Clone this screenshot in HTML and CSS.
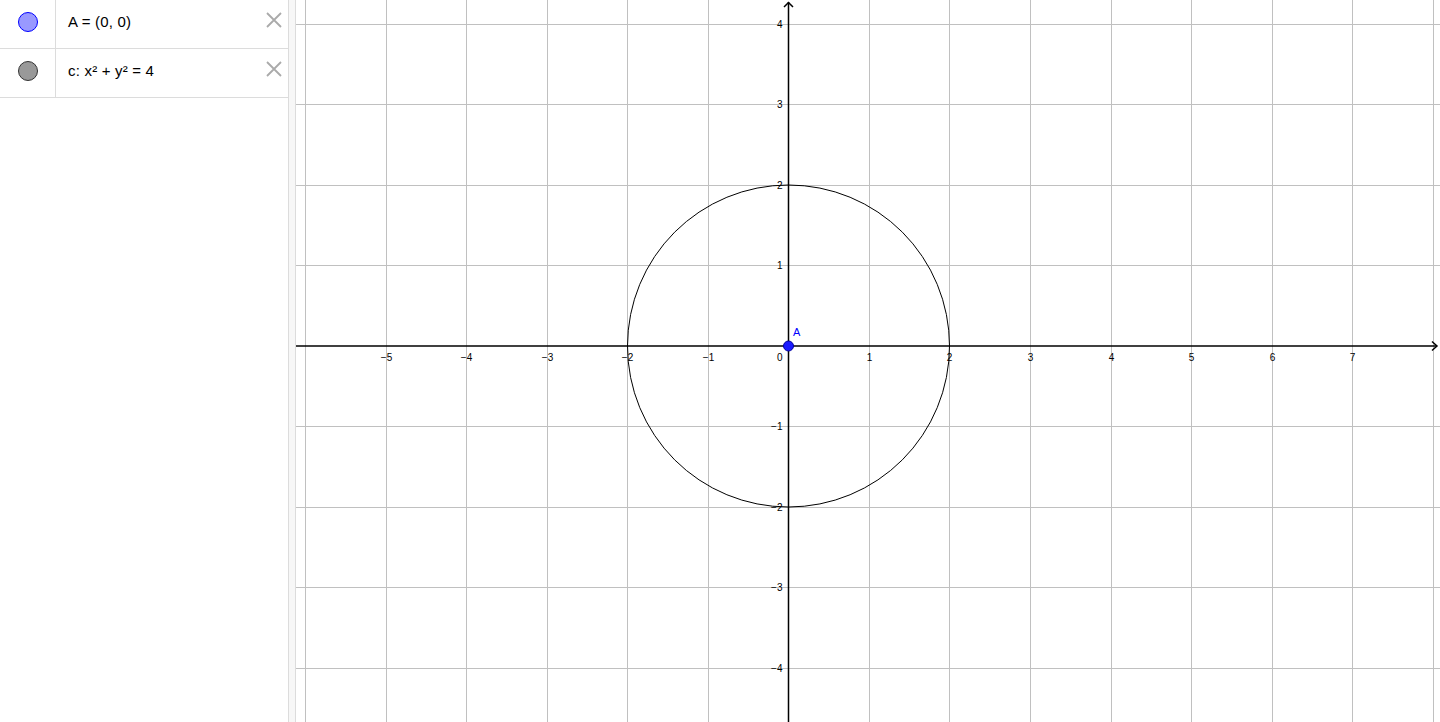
FILE: index.html
```html
<!DOCTYPE html>
<html lang="en">
<head>
  <meta charset="UTF-8">
  <meta name="viewport" content="width=device-width, initial-scale=1.0">
  <title>Graphing Calculator</title>
  <link rel="stylesheet" href="styles.css">
</head>
<body>
  <div class="app">
    <aside class="algebra">
      <div class="item">
        <div class="marker"><span class="dot dot-point"></span></div>
        <div class="formula">A = (0, 0)</div>
        <button class="close" aria-label="Delete">
          <svg width="16" height="16" viewBox="0 0 16 16"><path d="M1 1 L15 15 M15 1 L1 15" /></svg>
        </button>
      </div>
      <div class="item">
        <div class="marker"><span class="dot dot-conic"></span></div>
        <div class="formula">c: x² + y² = 4</div>
        <button class="close" aria-label="Delete">
          <svg width="16" height="16" viewBox="0 0 16 16"><path d="M1 1 L15 15 M15 1 L1 15" /></svg>
        </button>
      </div>
    </aside>
    <div class="splitter"></div>
    <main class="graphics">
      <svg class="plot" width="1144" height="722" viewBox="0 0 1144 722">
        <!-- grid -->
        <g class="grid">
          <line x1="9.5" y1="0" x2="9.5" y2="722" />
          <line x1="90.5" y1="0" x2="90.5" y2="722" />
          <line x1="170.5" y1="0" x2="170.5" y2="722" />
          <line x1="251.5" y1="0" x2="251.5" y2="722" />
          <line x1="331.5" y1="0" x2="331.5" y2="722" />
          <line x1="412.5" y1="0" x2="412.5" y2="722" />
          <line x1="573.5" y1="0" x2="573.5" y2="722" />
          <line x1="653.5" y1="0" x2="653.5" y2="722" />
          <line x1="734.5" y1="0" x2="734.5" y2="722" />
          <line x1="815.5" y1="0" x2="815.5" y2="722" />
          <line x1="895.5" y1="0" x2="895.5" y2="722" />
          <line x1="976.5" y1="0" x2="976.5" y2="722" />
          <line x1="1056.5" y1="0" x2="1056.5" y2="722" />
          <line x1="1137.5" y1="0" x2="1137.5" y2="722" />
          <line x1="0" y1="24.5" x2="1144" y2="24.5" />
          <line x1="0" y1="104.5" x2="1144" y2="104.5" />
          <line x1="0" y1="185.5" x2="1144" y2="185.5" />
          <line x1="0" y1="265.5" x2="1144" y2="265.5" />
          <line x1="0" y1="426.5" x2="1144" y2="426.5" />
          <line x1="0" y1="507.5" x2="1144" y2="507.5" />
          <line x1="0" y1="587.5" x2="1144" y2="587.5" />
          <line x1="0" y1="668.5" x2="1144" y2="668.5" />
        </g>
        <!-- axes -->
        <g class="axes">
          <line x1="0" y1="346" x2="1141" y2="346" />
          <polyline points="1136,341.5 1141,346 1136,350.5" />
          <line x1="492.5" y1="2" x2="492.5" y2="722" />
          <polyline points="488,7 492.5,2.5 497,7" />
        </g>
        <g class="ticks-x">
          <text x="90.5" y="361">−5</text>
          <text x="170.5" y="361">−4</text>
          <text x="251.5" y="361">−3</text>
          <text x="331.5" y="361">−2</text>
          <text x="412.5" y="361">−1</text>
          <text x="573.5" y="361">1</text>
          <text x="653.5" y="361">2</text>
          <text x="734.5" y="361">3</text>
          <text x="815.5" y="361">4</text>
          <text x="895.5" y="361">5</text>
          <text x="976.5" y="361">6</text>
          <text x="1056.5" y="361">7</text>
        </g>
        <g class="ticks-y">
          <text x="486.5" y="361">0</text>
          <text x="486.5" y="28">4</text>
          <text x="486.5" y="108">3</text>
          <text x="486.5" y="189">2</text>
          <text x="486.5" y="269">1</text>
          <text x="486.5" y="430">−1</text>
          <text x="486.5" y="511">−2</text>
          <text x="486.5" y="591">−3</text>
          <text x="486.5" y="672">−4</text>
        </g>
        <!-- objects -->
        <circle class="conic" cx="492.5" cy="346" r="161" />
        <circle class="point" cx="492.5" cy="346" r="5" />
        <text class="point-label" x="497" y="336">A</text>
      </svg>
    </main>
  </div>
</body>
</html>
```

FILE: styles.css
```css
:root {
  --border: #dcdcdc;
  --grid: #c0c0c0;
  --close: #aaaaaa;
}
body {
  margin: 0;
  font-family: 'Liberation Sans', Arial, sans-serif;
  background: #fff;
  overflow: hidden;
}
.app {
  display: flex;
  width: 1440px;
  height: 722px;
}
.algebra {
  width: 288px;
  flex-shrink: 0;
  background: #fff;
}
.item {
  display: flex;
  align-items: stretch;
  height: 48px;
  border-bottom: 1px solid var(--border);
}
.marker {
  width: 56px;
  flex-shrink: 0;
  display: flex;
  align-items: flex-start;
  justify-content: center;
  padding-top: 12px;
  box-sizing: border-box;
  border-right: 1px solid var(--border);
}
.dot {
  display: block;
  width: 18px;
  height: 18px;
  border-radius: 50%;
}
.dot-point {
  background: #9999ff;
  border: 1px solid #0000ff;
}
.dot-conic {
  background: #999999;
  border: 1px solid #333333;
}
.formula {
  flex: 1;
  padding: 13px 0 0 12px;
  font-size: 15px;
  line-height: 18px;
  letter-spacing: 0.2px;
  color: #000;
}
.close {
  width: 28px;
  padding: 12px 0 0 0;
  margin: 0;
  border: none;
  background: none;
  display: flex;
  align-items: flex-start;
  justify-content: center;
  cursor: pointer;
}
.close path {
  stroke: var(--close);
  stroke-width: 1.8;
  fill: none;
}
.splitter {
  width: 6px;
  flex-shrink: 0;
  background: #f7f7f7;
  border-left: 1px solid var(--border);
  border-right: 1px solid var(--border);
}
.graphics {
  flex: 1;
  position: relative;
  overflow: hidden;
}
.plot {
  display: block;
}
.grid line {
  stroke: var(--grid);
  stroke-width: 1;
}
.axes line,
.axes polyline {
  stroke: #000;
  stroke-width: 1.5;
  fill: none;
}
.ticks-x text,
.ticks-y text {
  font-family: 'Liberation Sans', Arial, sans-serif;
  font-size: 10px;
  fill: #000;
}
.ticks-x text {
  text-anchor: middle;
}
.ticks-y text {
  text-anchor: end;
}
.conic {
  fill: none;
  stroke: #000;
  stroke-width: 1;
}
.point {
  fill: #1a1aff;
  stroke: #0000a0;
  stroke-width: 1;
}
.point-label {
  font-family: 'Liberation Sans', Arial, sans-serif;
  font-size: 11px;
  fill: #0000ff;
}
```
